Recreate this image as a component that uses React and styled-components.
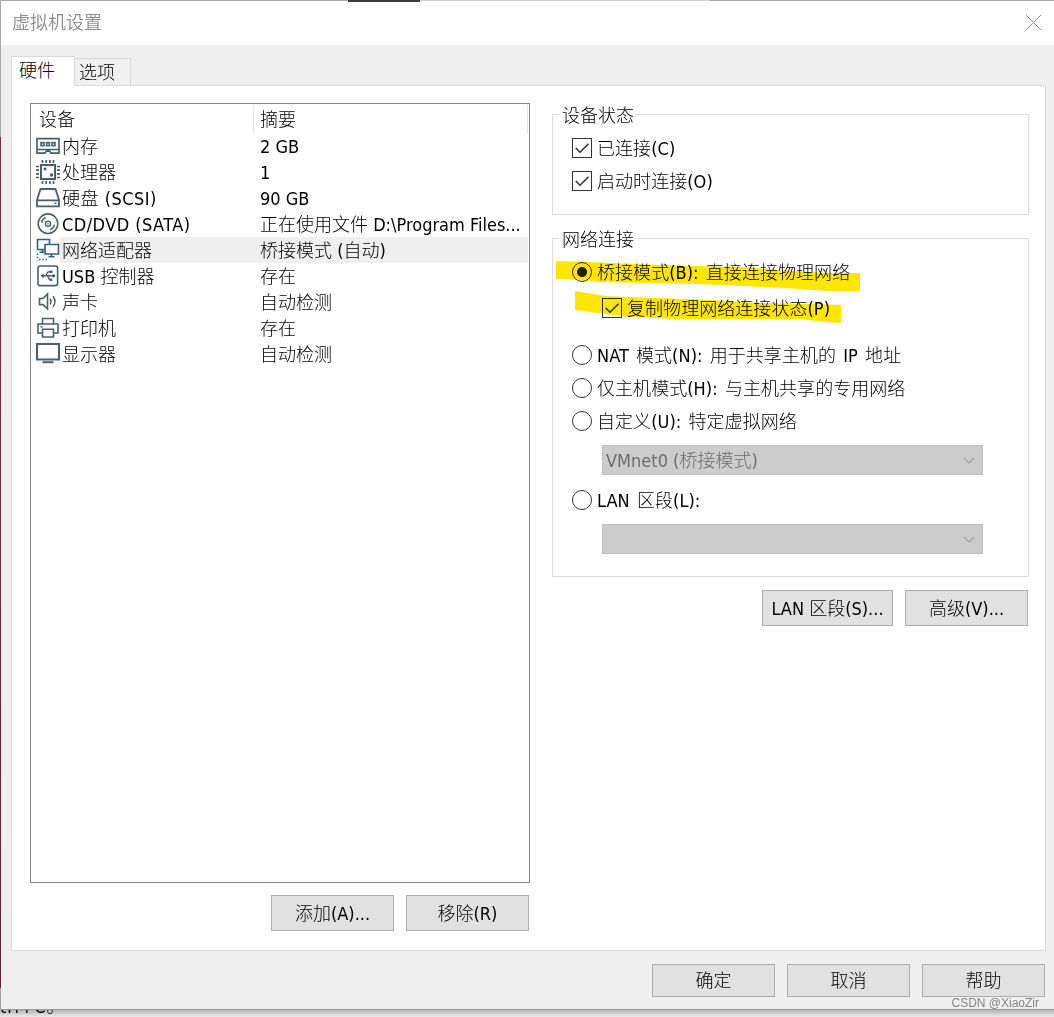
import React, { useState } from "react";
import styled, { createGlobalStyle } from "styled-components";

const devices = [
    { icon: "memory", name: "内存", summary: "2 GB" },
    { icon: "cpu", name: "处理器", summary: "1" },
    { icon: "disk", name: "硬盘 (SCSI)", summary: "90 GB", spacing: 0.5 },
    {
        icon: "cd",
        name: "CD/DVD (SATA)",
        summary: "正在使用文件 D:\\Program Files...",
        spacing: 0.45,
    },
    { icon: "network", name: "网络适配器", summary: "桥接模式 (自动)" },
    { icon: "usb", name: "USB 控制器", summary: "存在" },
    { icon: "sound", name: "声卡", summary: "自动检测" },
    { icon: "printer", name: "打印机", summary: "存在" },
    { icon: "display", name: "显示器", summary: "自动检测" },
];

const icons = {
    memory: (
        <>
            <path d="M1 4.7h22v14.4h-8l-1.5-2h-3L9 19.1H1zM1 15.5h22" strokeWidth="1.7" />
            <path d="M5 8.6h3v3H5zM10.5 8.6h3v3h-3zM16 8.6h3v3h-3z" />
        </>
    ),
    cpu: (
        <>
            <path d="M5 5h14v14H5z" strokeWidth="2" />
            <path
                d="M6.5 0v3M10.2 0v3M13.9 0v3M17.5 0v3M6.5 21v3M10.2 21v3M13.9 21v3M17.5 21v3M0 6.5h3M0 10.2h3M0 13.9h3M0 17.5h3M21 6.5h3M21 10.2h3M21 13.9h3M21 17.5h3"
                strokeWidth="1.7"
            />
            <circle cx="9" cy="9" r="1.5" fill="#4a5f6c" stroke="none" />
            <circle cx="15.5" cy="15" r="1.7" fill="#4a5f6c" stroke="none" />
        </>
    ),
    disk: (
        <>
            <path d="M4.5 3h15L23 14v6.3H1V14zM1 14.3h22" strokeWidth="1.8" />
            <path d="M18.5 17.3h2" />
        </>
    ),
    cd: (
        <>
            <circle cx="12" cy="11.7" r="9.8" />
            <circle cx="12" cy="11.7" r="2.6" strokeWidth="1.4" />
            <circle cx="12" cy="11.7" r=".8" fill="#4a5f6c" stroke="none" />
            <path d="M5.5 10.7a7 7 0 0 1 4.2-5.2M18.5 12.7a7 7 0 0 1-4.2 5.2" strokeWidth="1.4" />
        </>
    ),
    network: (
        <g stroke="#31617f">
            <path d="M9 11.5H1.5v-10h12V6M3.5 14.3h5M6.5 12v2.5" />
            <path d="M9 6.5h13.5V16H9zM12.5 18.8h6M15.5 16v3" />
            <path d="M1.5 15.5v7M3 21.5h9" strokeDasharray="1.5 1.7" />
        </g>
    ),
    usb: (
        <>
            <rect x="2" y="2" width="19.6" height="19.6" rx="2" />
            <path d="M6 11.8h11.5M8.5 11.8q1.8 0 2.3-2t2.2-2h2.5M10.5 11.8q1.5 0 2 2t2 2h.5" strokeWidth="1.4" />
            <path d="M7.8 9.4 4.4 11.8l3.4 2.4z" fill="#4a5f6c" stroke="none" />
            <circle cx="17.6" cy="11.8" r="1.6" fill="#4a5f6c" stroke="none" />
            <path d="M14 6.5h2.5V9H14zM13.7 14.6h2.5v2.5h-2.5z" fill="#4a5f6c" stroke="none" />
        </>
    ),
    sound: (
        <>
            <path d="M3.5 8.5H7l4.5-4.6v15L7 14.6H3.5z" />
            <path d="M14 8.8q2 2.8 0 5.6M17 6.3q4 5.2 0 10.6" strokeWidth="1.5" />
        </>
    ),
    printer: (
        <>
            <path d="M6.5 8V2.5h11V8M6.5 17H2V8h20v9h-4.5M6.5 13.3h11V21h-11z" />
            <path d="M4.5 10.8h2" />
        </>
    ),
    display: (
        <>
            <path d="M1 2h22v15.5H1z" strokeWidth="2" />
            <path d="M6.5 20.2h11" strokeWidth="2" />
        </>
    ),
};

function DeviceIcon({ name }) {
    return (
        <IconBox viewBox="0 0 24 24" aria-hidden="true">
            {icons[name]}
        </IconBox>
    );
}

function CheckBox({ label, ...props }) {
    const [checked, setChecked] = useState(true);
    return (
        <Option onClick={() => setChecked(!checked)} {...props}>
            <Box>
                {checked && (
                    <svg width="18" height="18" viewBox="0 0 18 18">
                        <path d="M2.8 9l4.2 4.2 8.5-8.5" />
                    </svg>
                )}
            </Box>
            <span>{label}</span>
        </Option>
    );
}

function Radio({ label, value, mode, setMode, ...props }) {
    return (
        <Option onClick={() => setMode(value)} {...props}>
            <Circle $on={mode === value} />
            <span>{label}</span>
        </Option>
    );
}

function Select({ value, ...props }) {
    return (
        <SelectBox {...props}>
            <span>{value}</span>
            <svg width="12" height="7" viewBox="0 0 12 7">
                <path d="M.8.8 6 6 11.2.8" />
            </svg>
        </SelectBox>
    );
}

export default function App() {
    const [selected, setSelected] = useState(4);
    const [mode, setMode] = useState("bridged");

    return (
        <Desktop>
            <GlobalStyle />
            <TopEdge>
                <i />
                <b />
            </TopEdge>
            <Middle>
                <LeftEdge />
                <Dialog>
                    <TitleBar>
                        <h1>虚拟机设置</h1>
                        <svg width="17" height="17" viewBox="0 0 17 17">
                            <path d="M1 1l15 15M16 1L1 16" />
                        </svg>
                    </TitleBar>
                    <Tabs>
                        <Tab $active>硬件</Tab>
                        <Tab>选项</Tab>
                    </Tabs>
                    <Page>
                        <LeftColumn>
                            <DeviceList>
                                <ListHeader>
                                    <span>设备</span>
                                    <span>摘要</span>
                                </ListHeader>
                                {devices.map((device, index) => {
                                    return (
                                        <DeviceRow
                                            key={device.icon}
                                            onClick={() => setSelected(index)}
                                        >
                                            <DeviceIcon name={device.icon} />
                                            <RowText
                                                $selected={index === selected}
                                                $spacing={device.spacing}
                                            >
                                                <span>{device.name}</span>
                                                <span>{device.summary}</span>
                                            </RowText>
                                        </DeviceRow>
                                    );
                                })}
                            </DeviceList>
                            <Buttons>
                                <Button>添加(A)...</Button>
                                <Button>移除(R)</Button>
                            </Buttons>
                        </LeftColumn>
                        <RightColumn>
                            <Group $height={101} $gap={23}>
                                <Legend>设备状态</Legend>
                                <CheckBox label="已连接(C)" $top={10} />
                                <CheckBox label="启动时连接(O)" $top={13} />
                            </Group>
                            <Group $height={339} $gap={13}>
                                <Legend>网络连接</Legend>
                                <Radio label="桥接模式(B): 直接连接物理网络" value="bridged" mode={mode} setMode={setMode} $top={10} />
                                <CheckBox label="复制物理网络连接状态(P)" $top={16} $indent />
                                <Radio label="NAT 模式(N): 用于共享主机的 IP 地址" value="nat" mode={mode} setMode={setMode} $top={27} />
                                <Radio label="仅主机模式(H): 与主机共享的专用网络" value="host" mode={mode} setMode={setMode} $top={13} />
                                <Radio label="自定义(U): 特定虚拟网络" value="custom" mode={mode} setMode={setMode} $top={13} />
                                <Select value="VMnet0 (桥接模式)" $top={14} />
                                <Radio label="LAN 区段(L):" value="lan" mode={mode} setMode={setMode} $top={15} />
                                <Select value="" $top={14} />
                                <Marker width="310" height="70" viewBox="552 258 310 70">
                                    <path d="M556 261L588 262L632 264L695 266L745 267L790 271L828 273L860 273V291L828 291L785 288L745 286L695 284L645 283L598 282L578 280L556 279Z" />
                                    <path d="M575 291L605 296L655 298L712 300L758 303L812 304L841 305V323L825 322L800 319H678L628 317L605 314L575 310Z" />
                                </Marker>
                            </Group>
                            <Buttons>
                                <Button $width={131}>LAN 区段(S)...</Button>
                                <Button>高级(V)...</Button>
                            </Buttons>
                        </RightColumn>
                    </Page>
                    <Footer>
                        <Button $height={33}>确定</Button>
                        <Button $height={33}>取消</Button>
                        <Button $height={33}>帮助</Button>
                        <Watermark>CSDN @XiaoZir</Watermark>
                    </Footer>
                </Dialog>
            </Middle>
            <BottomEdge>
                <span>trl+C。</span>
            </BottomEdge>
        </Desktop>
    );
}

const GlobalStyle = createGlobalStyle`
    * {
        box-sizing: border-box;
    }
    body {
        margin: 0;
        overflow: hidden;
    }
`;
const Desktop = styled.div`
    width: 1054px;
    height: 1017px;
    display: flex;
    flex-direction: column;
    overflow: hidden;
    background-color: #efefef;
    color: #000;
    font: 300 18px/26px "DejaVu Sans Condensed", "Noto Sans CJK SC", sans-serif;
    white-space: nowrap;
    svg {
        fill: none;
        flex: none;
    }
`;
const TopEdge = styled.div`
    height: 1px;
    flex: none;
    display: flex;
    padding-left: 348px;
    background-color: #a9a9a9;
    i {
        width: 72px;
        height: 2px;
        z-index: 1;
        background-color: #3c3c3c;
    }
    b {
        width: 290px;
        background-color: #d0d0d0;
    }
`;
const Middle = styled.div`
    display: flex;
    height: 1008px;
    flex: none;
`;
const LeftEdge = styled.div`
    width: 1px;
    background: linear-gradient(
        #a9a9a9 136px,
        #7c2f49 136px,
        #5c2345 987px,
        #a0a0a0 987px
    );
`;
const Dialog = styled.div`
    flex: 1;
    display: flex;
    flex-direction: column;
    background-color: #efefef;
`;
const TitleBar = styled.div`
    height: 44px;
    display: flex;
    align-items: center;
    justify-content: space-between;
    padding: 0 12px 2px 11px;
    background-color: #fff;
    h1 {
        margin: 0;
        padding-bottom: 2px;
        font: 350 18px/26px "Noto Sans CJK SC", sans-serif;
        color: #8c8c8c;
    }
    path {
        stroke: #888;
        stroke-width: 1;
    }
`;
const Tabs = styled.div`
    height: 40px;
    display: flex;
    align-items: flex-end;
    padding-left: 10px;
`;
const Tab = styled.div`
    border: 1px solid #d9d9d9;
    border-bottom: none;
    width: ${({ $active }) => ($active ? "64px" : "56px")};
    height: ${({ $active }) => ($active ? "30px" : "27px")};
    margin-bottom: ${({ $active }) => ($active ? "-1px" : "0")};
    padding-left: ${({ $active }) => ($active ? "7px" : "4px")};
    background-color: ${({ $active }) => ($active ? "#fff" : "#f0f0f0")};
    border-left-width: ${({ $active }) => ($active ? "1px" : "0")};
    position: relative;
    z-index: ${({ $active }) => ($active ? 1 : 0)};
    line-height: 28px;
`;
const Page = styled.div`
    width: 1035px;
    height: 866px;
    flex: none;
    margin-left: 10px;
    border: 1px solid #d9d9d9;
    background-color: #fff;
    display: flex;
    gap: 22px;
    padding: 17px 16px 0 18px;
`;
const LeftColumn = styled.div`
    width: 500px;
`;
const RightColumn = styled.div`
    width: 477px;
    padding-top: 11px;
`;
const DeviceList = styled.div`
    height: 780px;
    margin-bottom: 12px;
    border: 1px solid #828790;
    padding: 1px 1px 0 0;
`;
const ListHeader = styled.div`
    display: flex;
    height: 28px;
    line-height: 30px;
    span {
        height: 28px;
        border-right: 1px solid #e5e5e5;
    }
    span:first-child {
        width: 223px;
        padding-left: 8px;
    }
    span:last-child {
        flex: 1;
        padding-left: 6px;
    }
`;
const DeviceRow = styled.div`
    height: 26px;
    display: flex;
    align-items: center;
    padding-left: 5px;
`;
const IconBox = styled.svg`
    width: 24px;
    height: 24px;
    stroke: #4a5f6c;
    stroke-width: 1.6;
`;
const RowText = styled.div`
    flex: 1;
    height: 26px;
    display: flex;
    padding-left: 2px;
    line-height: 28px;
    background-color: ${({ $selected }) => ($selected ? "#efefef" : "#fff")};
    span:first-child {
        width: 198px;
        letter-spacing: ${({ $spacing }) => $spacing || 0}px;
    }
`;
const Buttons = styled.div`
    display: flex;
    justify-content: flex-end;
    gap: 12px;
    padding-right: 1px;
`;
const Button = styled.button`
    width: ${({ $width }) => $width || 123}px;
    height: ${({ $height }) => $height || 36}px;
    padding: ${({ $height }) => ($height ? "0" : "2px 0 0")};
    border: 1px solid #adadad;
    background-color: #e1e1e1;
    font: inherit;
    color: #000;
`;
const Group = styled.div`
    position: relative;
    height: ${({ $height }) => $height}px;
    margin-bottom: ${({ $gap }) => $gap}px;
    border: 1px solid #dcdcdc;
    padding-left: 19px;
`;
const Legend = styled.div`
    width: fit-content;
    height: 26px;
    margin: -13px 0 0 -13px;
    padding: 0 3px;
    line-height: 27px;
    background-color: #fff;
`;
const Option = styled.div`
    height: 20px;
    display: flex;
    align-items: center;
    gap: 5px;
    margin-top: ${({ $top }) => $top}px;
    margin-left: ${({ $indent }) => ($indent ? "30px" : "0")};
    line-height: 20px;
    letter-spacing: 0.05px;
    word-spacing: 2px;
    span {
        padding-top: 2px;
    }
`;
const Box = styled.div`
    width: 20px;
    height: 20px;
    border: 1px solid #333;
    background-color: #fff;
    path {
        stroke: #333;
        stroke-width: 1.6;
    }
`;
const Circle = styled.div`
    width: 20px;
    height: 20px;
    border: 1px solid #333;
    border-radius: 50%;
    background: ${({ $on }) =>
        $on ? "radial-gradient(circle, #222 4.6px, #fff 5.4px)" : "#fff"};
`;
const SelectBox = styled.div`
    width: 381px;
    height: 30px;
    display: flex;
    align-items: center;
    justify-content: space-between;
    margin-top: ${({ $top }) => $top}px;
    margin-left: 30px;
    padding: 0 7px 0 3px;
    border: 1px solid #bfbfbf;
    background-color: #ccc;
    color: #6d6d6d;
    span {
        padding-top: 2px;
    }
    path {
        stroke: #a0a0a0;
        stroke-width: 1.2;
    }
`;
// highlighter strokes drawn over the bridged options
const Marker = styled.svg`
    position: absolute;
    left: -1px;
    top: 19px;
    mix-blend-mode: multiply;
    pointer-events: none;
    path {
        fill: #ffe600;
    }
`;
const Footer = styled.div`
    position: relative;
    flex: 1;
    display: flex;
    justify-content: flex-end;
    gap: 12px;
    padding: 13px 9px 0 0;
`;
const Watermark = styled.div`
    position: absolute;
    right: 15px;
    bottom: -1px;
    font: 12px/14px "Liberation Sans", sans-serif;
    color: #808080;
    text-shadow: 0 0 1px #fff;
`;
// sliver of the page behind the dialog, under its shadow
const BottomEdge = styled.div`
    height: 8px;
    flex: none;
    display: flex;
    align-items: flex-end;
    overflow: hidden;
    border-top: 1px solid #9a9a9a;
    background: linear-gradient(#b4b4b4, #ececec);
    line-height: 20px;
    letter-spacing: 0.8px;
`;
